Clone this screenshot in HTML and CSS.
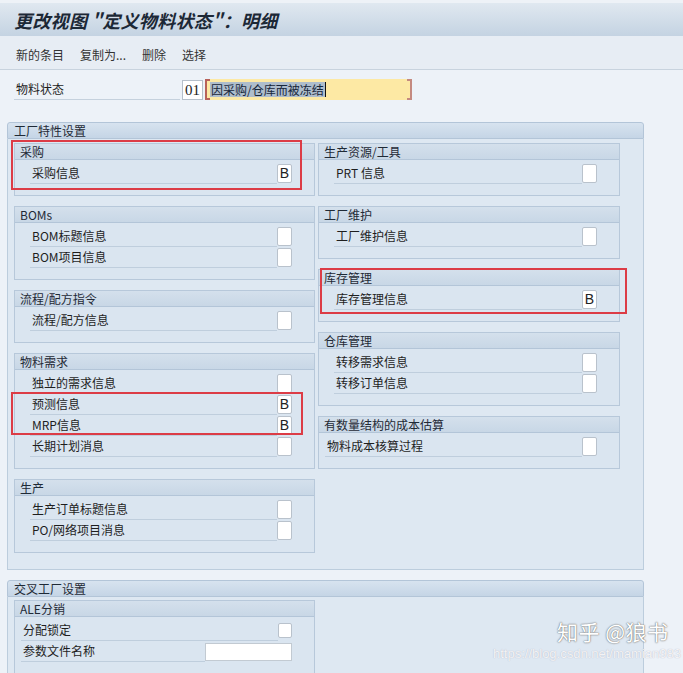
FILE: index.html
```html
<!DOCTYPE html>
<html lang="zh-CN">
<head>
<meta charset="utf-8">
<title>更改视图 "定义物料状态"：明细</title>
<link rel="stylesheet" href="styles.css">
</head>
<body>
<div class="app">
  <div class="titlebar"><h1>更改视图 "定义物料状态"：明细</h1></div>
  <div class="toolbar">
    <span>新的条目</span><span>复制为...</span><span>删除</span><span>选择</span>
  </div>

  <div class="fieldrow">
    <span class="flabel">物料状态</span>
    <span class="code">01</span>
    <span class="tfield"><span class="sel">因采购/仓库而被冻结</span><span class="caret"></span><span class="br bl"></span><span class="br brr"></span></span>
  </div>

  <section class="group g1">
    <div class="ghead">工厂特性设置</div>
    <div class="gbody">
      <div class="col">
        <div class="box">
          <div class="bhead">采购</div>
          <div class="bbody">
            <div class="row"><span class="lbl">采购信息</span><span class="cb">B</span></div>
          </div>
        </div>
        <div class="box">
          <div class="bhead">BOMs</div>
          <div class="bbody">
            <div class="row"><span class="lbl">BOM标题信息</span><span class="cb"></span></div>
            <div class="row"><span class="lbl">BOM项目信息</span><span class="cb"></span></div>
          </div>
        </div>
        <div class="box">
          <div class="bhead">流程/配方指令</div>
          <div class="bbody">
            <div class="row"><span class="lbl">流程/配方信息</span><span class="cb"></span></div>
          </div>
        </div>
        <div class="box">
          <div class="bhead">物料需求</div>
          <div class="bbody">
            <div class="row"><span class="lbl">独立的需求信息</span><span class="cb"></span></div>
            <div class="row"><span class="lbl">预测信息</span><span class="cb">B</span></div>
            <div class="row"><span class="lbl">MRP信息</span><span class="cb">B</span></div>
            <div class="row"><span class="lbl">长期计划消息</span><span class="cb"></span></div>
          </div>
        </div>
        <div class="box">
          <div class="bhead">生产</div>
          <div class="bbody">
            <div class="row"><span class="lbl">生产订单标题信息</span><span class="cb"></span></div>
            <div class="row"><span class="lbl">PO/网络项目消息</span><span class="cb"></span></div>
          </div>
        </div>
      </div>
      <div class="col">
        <div class="box">
          <div class="bhead">生产资源/工具</div>
          <div class="bbody">
            <div class="row"><span class="lbl">PRT 信息</span><span class="cb"></span></div>
          </div>
        </div>
        <div class="box">
          <div class="bhead">工厂维护</div>
          <div class="bbody">
            <div class="row"><span class="lbl">工厂维护信息</span><span class="cb"></span></div>
          </div>
        </div>
        <div class="box">
          <div class="bhead">库存管理</div>
          <div class="bbody">
            <div class="row"><span class="lbl">库存管理信息</span><span class="cb">B</span></div>
          </div>
        </div>
        <div class="box">
          <div class="bhead">仓库管理</div>
          <div class="bbody">
            <div class="row"><span class="lbl">转移需求信息</span><span class="cb"></span></div>
            <div class="row"><span class="lbl">转移订单信息</span><span class="cb"></span></div>
          </div>
        </div>
        <div class="box">
          <div class="bhead">有数量结构的成本估算</div>
          <div class="bbody">
            <div class="row tight"><span class="lbl">物料成本核算过程</span><span class="cb"></span></div>
          </div>
        </div>
      </div>
    </div>
  </section>

  <section class="group g2">
    <div class="ghead">交叉工厂设置</div>
    <div class="gbody">
      <div class="col">
        <div class="box">
          <div class="bhead">ALE分销</div>
          <div class="bbody">
            <div class="row tight"><span class="lbl">分配锁定</span><span class="cb small"></span></div>
            <div class="row tight"><span class="lbl">参数文件名称</span><span class="input"></span></div>
          </div>
        </div>
      </div>
    </div>
  </section>

  <div class="hl hl1"></div>
  <div class="hl hl2"></div>
  <div class="hl hl3"></div>

  <div class="mark">知乎 @狼书</div>
  <div class="mark2">https://blog.csdn.net/mamian983</div>
</div>
</body>
</html>
```

FILE: styles.css
```css
* { box-sizing: border-box; }

body {
  margin: 0;
  background: #e9eff6;
  font-family: "Noto Sans CJK SC", "Noto Sans", sans-serif;
  font-size: 12px;
  color: #1e1e1e;
}

.app {
  position: relative;
  width: 683px;
  height: 673px;
  overflow: hidden;
  background: #edf2f8;
}

.titlebar {
  height: 36px;
  border-top: 3px solid #eef2f7;
  background: linear-gradient(#e0e8f0, #c4d3e2);
  padding-left: 14px;
  display: flex;
  align-items: center;
}

.titlebar h1 {
  margin: 0;
  font-size: 18px;
  font-weight: bold;
  font-style: italic;
  color: #1c2836;
  letter-spacing: 0.3px;
}

.toolbar {
  height: 34px;
  background: #e7edf4;
  border-bottom: 1px solid #c8d3de;
  display: flex;
  align-items: center;
  padding: 4px 0 0 16px;
  gap: 16px;
  color: #333;
}

.fieldrow {
  display: flex;
  align-items: center;
  height: 21px;
  margin-top: 9px;
}

.flabel {
  width: 166px;
  height: 21px;
  margin-left: 14px;
  padding-left: 2px;
  line-height: 20px;
  border-bottom: 1px solid #c5d1dd;
}

.code {
  width: 21px;
  height: 20px;
  margin-left: 2px;
  background: #fff;
  border: 1px solid #b6c0ca;
  font-family: "Liberation Serif", serif;
  font-size: 15px;
  line-height: 18px;
  text-align: center;
  color: #222;
}

.tfield {
  position: relative;
  width: 207px;
  height: 21px;
  margin-left: 2px;
  background: #fde9a4;
  display: flex;
  align-items: center;
  padding-left: 5px;
}

.sel {
  background: #aebdcc;
  color: #17263a;
  line-height: 15px;
  padding: 0 1px;
}

.caret {
  width: 1px;
  height: 15px;
  background: #111;
}

.br {
  position: absolute;
  top: 0;
  bottom: 0;
  width: 5px;
  border: 2px solid #b8625a;
}

.bl { left: 0; border-right: none; }

.brr {
  right: 0;
  border-left: none;
  border-color: #c48a80;
}

.group {
  margin-left: 7px;
  width: 637px;
}

.g1 { margin-top: 22px; }
.g2 { margin-top: 10px; }

.ghead {
  height: 17px;
  background: linear-gradient(#d7e3ef, #c5d5e6);
  border: 1px solid #b3c5d8;
  border-radius: 3px 3px 0 0;
  padding-left: 6px;
  line-height: 15px;
  color: #1f2a36;
}

.gbody {
  background: #dee8f2;
  border: 1px solid #bccddd;
  border-top: none;
  padding: 4px 22px 16px 6px;
  display: grid;
  grid-template-columns: 301px 302px;
  column-gap: 3px;
  align-items: start;
}

.g2 .gbody { padding-top: 3px; }

.col {
  display: flex;
  flex-direction: column;
  gap: 10px;
}

.box {
  border: 1px solid #b7c8da;
  background: #dae5f0;
}

.bhead {
  height: 16px;
  background: linear-gradient(#d4e0ec, #c8d7e6);
  border-bottom: 1px solid #b3c5d8;
  padding-left: 5px;
  line-height: 15px;
  color: #1f2a36;
}

.bbody { padding: 3px 0 11px; }

.row {
  display: flex;
  align-items: center;
  height: 21px;
  padding: 0 22px 0 15px;
}

.row.tight { padding-left: 6px; }

.lbl {
  flex: 1;
  height: 21px;
  padding-left: 2px;
  line-height: 20px;
  border-bottom: 1px solid #bfcedd;
}

.cb {
  width: 15px;
  height: 19px;
  background: #fff;
  border: 1px solid #b9c2cc;
  border-radius: 2px;
  font-family: "Liberation Sans", sans-serif;
  font-size: 14px;
  line-height: 17px;
  text-align: center;
  color: #222;
}

.cb.small {
  width: 14px;
  height: 15px;
}

.input {
  width: 87px;
  height: 18px;
  background: #fff;
  border: 1px solid #c2cad2;
}

.hl {
  position: absolute;
  border: 2px solid #dc3c46;
}

.hl1 { left: 11px; top: 140px; width: 291px; height: 50px; }
.hl2 { left: 320px; top: 268px; width: 307px; height: 46px; }
.hl3 { left: 11px; top: 392px; width: 292px; height: 43px; }

.mark {
  position: absolute;
  left: 557px;
  top: 616px;
  font-size: 21px;
  color: #fff;
  letter-spacing: 0.5px;
  text-shadow: 0 0 1px #666, 0 0 2px #888;
}

.mark2 {
  position: absolute;
  left: 493px;
  top: 646px;
  font-family: "Liberation Sans", sans-serif;
  font-size: 13px;
  color: rgba(255, 255, 255, 0.85);
  text-shadow: 0 0 1px #aab;
}
```
